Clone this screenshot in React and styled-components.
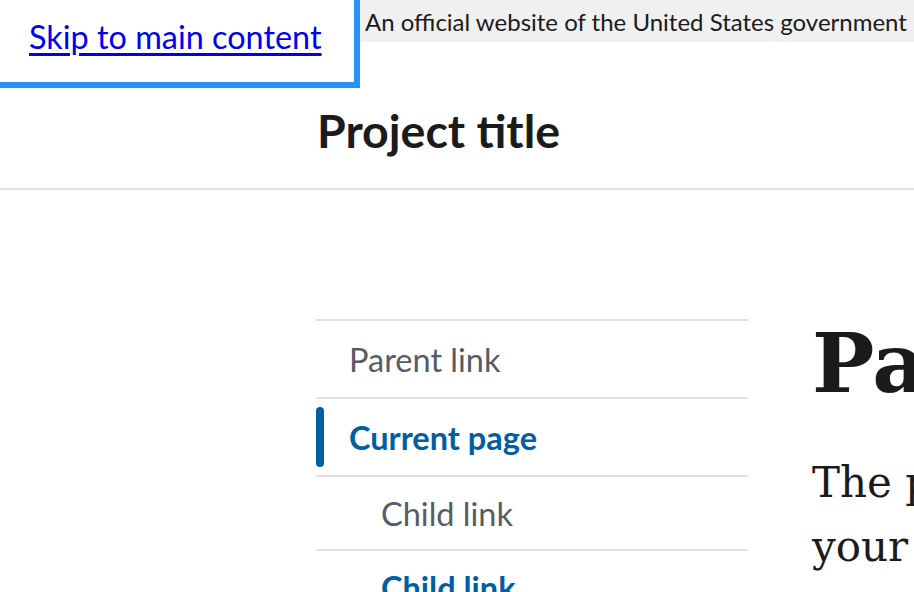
import React from "react";
import styled, { createGlobalStyle } from "styled-components";

const GlobalStyle = createGlobalStyle`
  html, body {
    margin: 0;
    padding: 0;
    background: #fff;
    overflow: hidden;
  }
  body {
    font-family: Lato, "Noto Sans", sans-serif;
    color: #1b1b1b;
  }
`;

const Page = styled.div`
  position: relative;
  width: 914px;
  height: 592px;
  overflow: hidden;
`;

const SkipLink = styled.a`
  position: absolute;
  top: 0;
  left: 0;
  z-index: 10;
  box-sizing: border-box;
  width: 360px;
  height: 88px;
  padding: 17px 0 0 29px;
  background: #fff;
  border-right: 6px solid #2491ff;
  border-bottom: 6px solid #2491ff;
  color: #0000ee;
  font-family: Lato, sans-serif;
  font-size: 32.4px;
  text-decoration: underline;
  text-underline-offset: 4px;
`;

const Banner = styled.section`
  height: 42px;
  background: #f0f0f0;
  display: flex;
  align-items: center;
  padding-left: 365px;
  font-size: 24px;
  white-space: nowrap;
`;

const Header = styled.header`
  box-sizing: border-box;
  height: 148px;
  border-bottom: 2px solid #dfe1e2;
  display: flex;
  align-items: center;
  padding: 30px 0 0 317px;
`;

const Title = styled.div`
  font-size: 46.5px;
  font-weight: 700;
`;

const Layout = styled.div`
  display: grid;
  grid-template-columns: 432px 620px;
  column-gap: 64px;
  padding: 129px 0 0 316px;
`;

const SideNav = styled.ul`
  list-style: none;
  margin: 0;
  padding: 0;
  border-top: 2px solid #dfe1e2;
`;

const NavItem = styled.li`
  position: relative;
  box-sizing: border-box;
  height: ${(p) => p.$h}px;
  border-bottom: 2px solid #dfe1e2;
  display: flex;
  align-items: center;
  padding-left: ${(p) => (p.$child ? 65 : 33)}px;
  font-size: 32.5px;
  color: ${(p) => (p.$active ? "#005ea2" : "#565c65")};
  font-weight: ${(p) => (p.$active ? 700 : 400)};

  ${(p) =>
    p.$current &&
    `
    &::before {
      content: "";
      position: absolute;
      left: 0;
      top: 8px;
      bottom: 8px;
      width: 8px;
      border-radius: 4px;
      background: #005ea2;
    }
  `}
`;

const Main = styled.main`
  font-family: "DejaVu Serif", serif;
`;

const Heading = styled.h1`
  margin: 0;
  font-size: 83px;
  line-height: 1;
  font-weight: 700;
  white-space: nowrap;
  padding-top: 3px;
`;

const Lead = styled.p`
  margin: 46px 0 0;
  font-size: 42px;
  line-height: 64px;
  white-space: nowrap;
`;

export default function App() {
  return (
    <Page>
      <GlobalStyle />
      <SkipLink href="#main">Skip to main content</SkipLink>
      <Banner>An official website of the United States government</Banner>
      <Header>
        <Title>Project title</Title>
      </Header>
      <Layout>
        <nav>
          <SideNav>
            <NavItem $h={78}>Parent link</NavItem>
            <NavItem $h={78} $active $current>Current page</NavItem>
            <NavItem $h={74} $child>Child link</NavItem>
            <NavItem $h={74} $child $active>Child link</NavItem>
          </SideNav>
        </nav>
        <Main id="main">
          <Heading>Page heading</Heading>
          <Lead>
            The page heading communicates the main focus of
            <br />
            your page.
          </Lead>
        </Main>
      </Layout>
    </Page>
  );
}
